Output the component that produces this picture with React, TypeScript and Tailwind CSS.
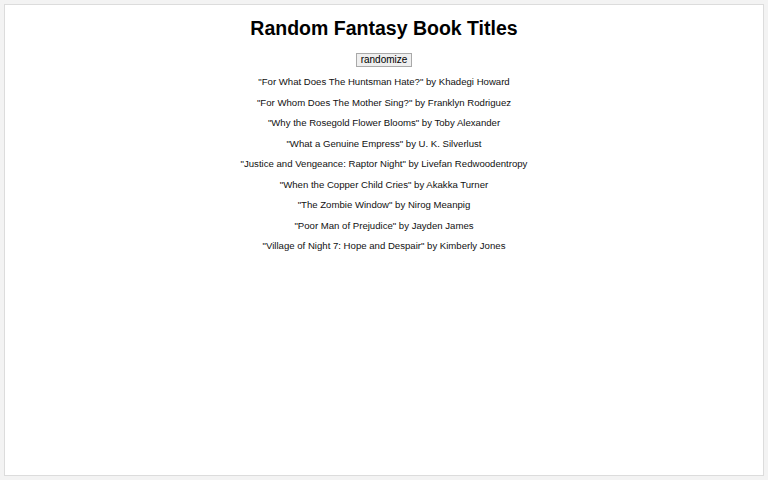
import React, { useState } from "react";

const titles = [
  { title: "For What Does The Huntsman Hate?", author: "Khadegi Howard" },
  { title: "For Whom Does The Mother Sing?", author: "Franklyn Rodriguez" },
  { title: "Why the Rosegold Flower Blooms", author: "Toby Alexander" },
  { title: "What a Genuine Empress", author: "U. K. Silverlust" },
  { title: "Justice and Vengeance: Raptor Night", author: "Livefan Redwoodentropy" },
  { title: "When the Copper Child Cries", author: "Akakka Turner" },
  { title: "The Zombie Window", author: "Nirog Meanpig" },
  { title: "Poor Man of Prejudice", author: "Jayden James" },
  { title: "Village of Night 7: Hope and Despair", author: "Kimberly Jones" },
];

export default function App() {
  const [books, setBooks] = useState(titles);

  const shuffle = () => {
    setBooks((prev) => [...prev].sort(() => Math.random() - 0.5));
  };

  return (
    <div className="h-[480px] w-[768px] bg-[#f3f3f3] p-1 font-['Liberation_Sans',Arial,sans-serif] text-black">
      <div className="h-full border border-[#dcdcdc] bg-white flex flex-col items-center">
        <h1 className="mt-[12px] text-[19.5px] leading-[22px] font-bold">Random Fantasy Book Titles</h1>
        <button
          onClick={shuffle}
          className="mt-[14px] h-[14px] px-[4px] border border-[#a9a9a9] bg-[#efefef] text-[10px] leading-[12px] cursor-pointer"
        >
          randomize
        </button>
        <div className="mt-[9px] flex flex-col items-center">
          {books.map((b, i) => (
            <p key={i} className="text-[9.6px] leading-[12px] mb-[8.5px] text-[#111]">
              "{b.title}" by {b.author}
            </p>
          ))}
        </div>
      </div>
    </div>
  );
}
